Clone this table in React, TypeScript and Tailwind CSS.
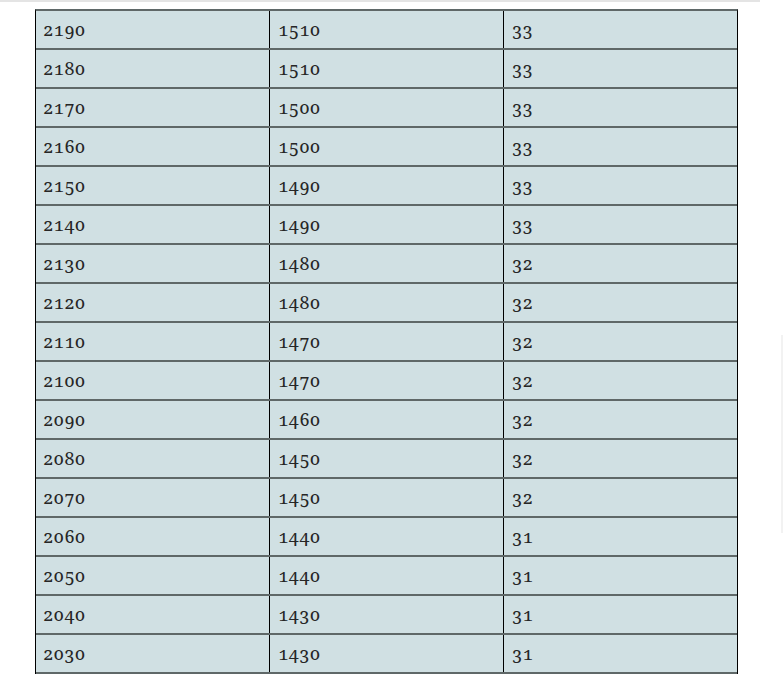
const rows: [string, string, string][] = [
  ['2190', '1510', '33'],
  ['2180', '1510', '33'],
  ['2170', '1500', '33'],
  ['2160', '1500', '33'],
  ['2150', '1490', '33'],
  ['2140', '1490', '33'],
  ['2130', '1480', '32'],
  ['2120', '1480', '32'],
  ['2110', '1470', '32'],
  ['2100', '1470', '32'],
  ['2090', '1460', '32'],
  ['2080', '1450', '32'],
  ['2070', '1450', '32'],
  ['2060', '1440', '31'],
  ['2050', '1440', '31'],
  ['2040', '1430', '31'],
  ['2030', '1430', '31'],
];

export default function App() {
  return (
    <div className="relative min-h-[675px] bg-white font-['Noto_Serif',serif] oldstyle-nums text-[#262626]">
      <div className="h-[2px] w-[760px] bg-[#e4e4e4]" />
      <div className="ml-[35px] mt-[7px] w-[703px] border-l border-r border-t-2 border-l-black border-r-black border-t-[#5f6868] bg-[#d0e0e3]">
        {rows.map((r, i) => (
          <div key={i} className="grid h-[39px] grid-cols-[234px_234px_1fr] border-b-2 border-[#5f6868]">
            <div className="flex items-center border-r border-black pl-[7px] text-[18px] tracking-[0.2px]">{r[0]}</div>
            <div className="flex items-center border-r border-black pl-[8px] text-[18px] tracking-[0.2px]">{r[1]}</div>
            <div className="flex items-center pl-[8px] text-[18px] tracking-[0.2px]">{r[2]}</div>
          </div>
        ))}
      </div>
      <div className="absolute right-0 top-[335px] h-[198px] w-[2px] bg-[#f2f2f2]" />
    </div>
  );
}
